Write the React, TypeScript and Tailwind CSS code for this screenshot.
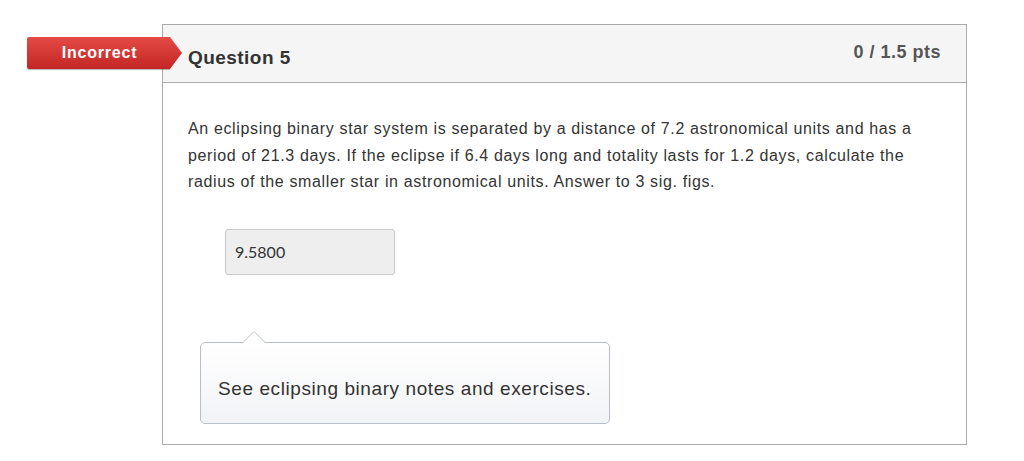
export default function App() {
  return (
    <div className="w-[1024px] h-[461px] bg-white pt-[24px] pl-[162px] font-['Liberation_Sans',Arial,sans-serif] text-[#2d3b45]">
      <div className="relative w-[805px] h-[421px] border border-[#aaaaaa] bg-white">
        {/* Header */}
        <div className="h-[58px] bg-[#f5f5f5] border-b border-[#aaaaaa] flex justify-between pl-[25px] pr-[25px]">
          <div className="pt-[19px] text-[19px] font-bold tracking-[0.45px] text-[#333333]">Question 5</div>
          <div className="pt-[14px] text-[18px] font-bold tracking-[0.5px] text-[#555555]">0 / 1.5 pts</div>
        </div>

        {/* Incorrect badge */}
        <div className="absolute left-[-136px] top-[12px] flex items-center">
          <div className="w-[143px] h-[32px] rounded-l-[2px] bg-gradient-to-b from-[#e54a47] to-[#c32523] shadow-[0_1px_1px_rgba(0,0,0,0.3)] text-white font-bold text-[16px] tracking-[0.8px] flex items-center justify-center pl-[2px]">
            Incorrect
          </div>
          <svg width="13" height="32" viewBox="0 0 13 32" className="-ml-px">
            <defs>
              <linearGradient id="rg" x1="0" y1="0" x2="0" y2="1">
                <stop offset="0" stopColor="#e54a47" />
                <stop offset="1" stopColor="#c32523" />
              </linearGradient>
            </defs>
            <path d="M0 0 L1 0 L13 16 L1 32 L0 32 Z" fill="url(#rg)" />
          </svg>
        </div>

        {/* Body */}
        <div className="pl-[25px] pr-[40px] pt-[33px]">
          <p className="text-[16px] leading-[26.5px] tracking-[0.64px] text-[#333333]">
            An eclipsing binary star system is separated by a distance of 7.2 astronomical units and has a period of 21.3 days. If the eclipse if 6.4 days long and totality lasts for 1.2 days, calculate the radius of the smaller star in astronomical units. Answer to 3 sig. figs.
          </p>

          <div className="mt-[33px] ml-[37px] w-[170px] h-[46px] bg-[#eeeeee] border border-[#c8c8c8] rounded-[3px] flex items-center pl-[9px] text-[16px] text-[#333333] font-['Lato',sans-serif]">
            9.5800
          </div>

          <div className="relative mt-[67px] ml-[12px] w-[410px] h-[82px] rounded-[5px] border border-[#b8bec8] bg-gradient-to-b from-white to-[#f2f3f6] flex items-center pl-[17px] pt-[14px]">
            <svg width="24" height="13" viewBox="0 0 24 13" className="absolute left-[41px] top-[-12px]">
              <path d="M0 12.5 L12 0.5 L24 12.5" fill="#ffffff" stroke="#b8bec8" strokeWidth="1" />
              <rect x="0" y="12" width="24" height="2" fill="#ffffff" />
            </svg>
            <span className="text-[19px] tracking-[0.58px] text-[#333333]">See eclipsing binary notes and exercises.</span>
          </div>
        </div>
      </div>
    </div>
  );
}
